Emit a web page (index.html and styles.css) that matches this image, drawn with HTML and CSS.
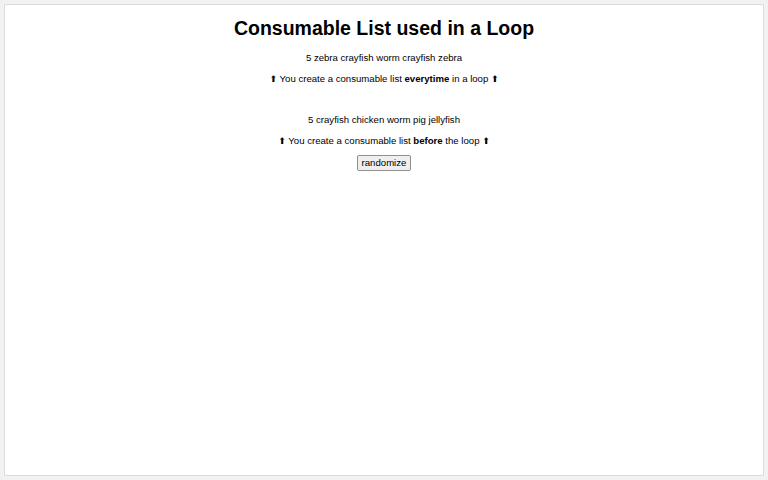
FILE: index.html
```html
<!DOCTYPE html>
<html>
<head>
<meta charset="utf-8">
<link rel="stylesheet" href="styles.css">
</head>
<body>
<main class="panel">
  <h1 class="title">Consumable List used in a Loop</h1>
  <section class="demo">
    <p class="items">5 zebra crayfish worm crayfish zebra</p>
    <p class="note"><span class="arrow">⬆</span> You create a consumable list <b>everytime</b> in a loop <span class="arrow">⬆</span></p>
  </section>
  <section class="demo second">
    <p class="items">5 crayfish chicken worm pig jellyfish</p>
    <p class="note"><span class="arrow">⬆</span> You create a consumable list <b>before</b> the loop <span class="arrow">⬆</span></p>
  </section>
  <button class="btn" type="button">randomize</button>
</main>
</body>
</html>
```

FILE: styles.css
```css
html, body {
  margin: 0;
  height: 100%;
}

body {
  background: #f2f2f2;
  padding: 4px;
  box-sizing: border-box;
  font-family: "Liberation Sans", Arial, sans-serif;
  color: #000;
}

.panel {
  height: 100%;
  box-sizing: border-box;
  background: #fff;
  border: 1px solid #dcdcdc;
  display: flex;
  flex-direction: column;
  align-items: center;
  padding-top: 12px;
}

.title {
  margin: 0;
  font-size: 19.5px;
  font-weight: bold;
  line-height: 22px;
}

.demo {
  display: flex;
  flex-direction: column;
  align-items: center;
  margin-top: 13px;
}

.demo.second {
  margin-top: 29px;
}

.demo p {
  margin: 0;
  font-size: 9.6px;
  line-height: 12px;
}

.demo .note {
  margin-top: 9px;
}

.arrow {
  font-family: "DejaVu Sans", sans-serif;
  font-size: 9px;
}

.btn {
  margin-top: 8px;
  font-family: "Liberation Sans", Arial, sans-serif;
  font-size: 9.6px;
  line-height: 12px;
  padding: 1px 4px;
  background: #efefef;
  border: 1px solid #8f8f8f;
  border-radius: 2px;
  color: #000;
}
```
